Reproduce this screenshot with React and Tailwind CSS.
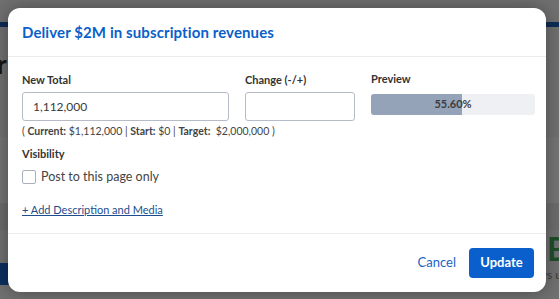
import React, { useState } from "react";

const Field = ({ label, children, className = "" }) => (
  <div className={className}>
    <div className="text-[11px] font-bold text-[#333] leading-[14px] mb-[5px]">{label}</div>
    {children}
  </div>
);

const App = () => {
  const [total, setTotal] = useState("1,112,000");
  const [change, setChange] = useState("");
  const [postHere, setPostHere] = useState(false);
  const percent = 55.6;

  return (
    <div
      className="relative h-[299px] w-[559px] overflow-hidden bg-[#707070]"
      style={{ fontFamily: "Lato, 'Open Sans', Arial, sans-serif" }}
    >
      {/* page behind the overlay */}
      <div className="flex flex-col h-full">
        <div className="h-[22px]" />
        <div className="h-[5px] bg-[#0d2c55]" />
        <div className="h-[26px]" />
        <div className="h-[22px] text-[26px] font-bold leading-[22px] text-[#161616]">
          <span className="-ml-[3px]">r</span>
        </div>
        <div className="h-[62px]" />
        <div className="h-[66px] bg-[#747474]" />
        <div className="h-[27px] bg-[#6c6c6c]" />
        <div className="flex justify-between items-start flex-1">
          <div className="flex flex-col">
            <div className="h-[33px]" />
            <div className="w-[10px] h-[22px] bg-[#0c2f5e]" />
          </div>
          <div className="flex flex-col items-end pt-[6px]">
            <span className="text-[32px] font-bold leading-[26px] text-[#1f4d2a] -mr-[9px]">B</span>
            <span className="text-[12px] leading-[16px] text-[#3a3a3a] -mr-[3px] mt-[5px]">ys u</span>
          </div>
        </div>
      </div>

      {/* modal */}
      <div className="absolute left-[8px] top-[8px] w-[538px] h-[284px] rounded-[12px] bg-white shadow-[0_0_18px_rgba(0,0,0,0.35)] flex flex-col">
        <div className="h-[49px] flex items-center px-[14px] border-b border-[#ececec]">
          <h2 className="text-[15px] font-bold text-[#0a5fc9] tracking-[0.1px]">
            Deliver $2M in subscription revenues
          </h2>
        </div>

        <div className="flex-1 pl-[14px] pr-[11px] pt-[16px]">
          <div className="flex gap-[16px]">
            <Field label="New Total" className="w-[207px]">
              <input
                value={total}
                onChange={(e) => setTotal(e.target.value)}
                className="w-full h-[29px] border border-[#b5bcc7] rounded-[3px] px-[10px] text-[12px] text-[#3a3a3a] outline-none"
              />
            </Field>
            <Field label="Change (-/+)" className="w-[110px]">
              <input
                value={change}
                onChange={(e) => setChange(e.target.value)}
                className="w-full h-[29px] border border-[#b5bcc7] rounded-[3px] px-[10px] text-[12px] text-[#3a3a3a] outline-none"
              />
            </Field>
            <div className="w-[164px]">
              <div className="text-[11px] font-bold text-[#333] leading-[14px] -mt-[1px]">Preview</div>
              <div className="relative mt-[8px] h-[21px] rounded-[3px] bg-[#eff0f4] overflow-hidden">
                <div className="h-full bg-[#95a3b8]" style={{ width: `${percent}%` }} />
                <div className="absolute inset-0 flex items-center justify-center text-[11px] font-bold text-[#3d3d3d]">
                  55.60%
                </div>
              </div>
            </div>
          </div>

          <div className="mt-[3px] text-[10.5px] leading-[14px] text-[#444] whitespace-nowrap">
            ( <b>Current:</b> $1,112,000 | <b>Start:</b> $0 | <b>Target:</b>&nbsp; $2,000,000 )
          </div>

          <div className="mt-[9px] text-[11px] font-bold text-[#333] leading-[14px]">Visibility</div>
          <label className="mt-[8px] flex items-center gap-[5px] cursor-pointer">
            <input
              type="checkbox"
              checked={postHere}
              onChange={(e) => setPostHere(e.target.checked)}
              className="appearance-none w-[14px] h-[14px] border border-[#a8b0bb] rounded-[2px] bg-white checked:bg-[#0a5fc9]"
            />
            <span className="text-[12.5px] text-[#444] leading-[16px]">Post to this page only</span>
          </label>

          <a href="#" className="inline-block mt-[18px] text-[11px] leading-[14px] text-[#1d4d8c] underline">
            + Add Description and Media
          </a>
        </div>

        <div className="h-[59px] border-t border-[#ececec] flex items-center justify-end gap-[12px] pr-[12px]">
          <button className="text-[13px] text-[#1a63c7] px-[1px]">Cancel</button>
          <button className="h-[30px] w-[65px] rounded-[4px] bg-[#0a5fcd] text-white text-[13px] font-bold">
            Update
          </button>
        </div>
      </div>
    </div>
  );
};

export default App;
